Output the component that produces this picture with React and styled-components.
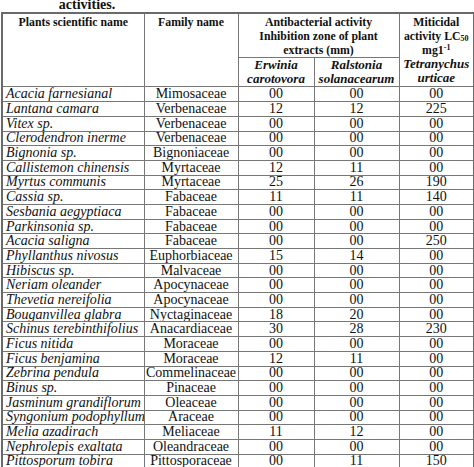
import styled, { createGlobalStyle } from 'styled-components';

const GlobalStyle = createGlobalStyle`
  html, body {
    margin: 0;
    padding: 0;
    background: #fff;
  }
  body {
    font-family: "Liberation Serif", "Times New Roman", serif;
    color: #111;
  }
`

const Page = styled.div`
  width: 474px;
  height: 467px;
  overflow: hidden;
  padding: 0 1px;
  box-sizing: border-box;
`

const Caption = styled.div`
  width: 172px;
  height: 12px;
  line-height: 9px;
  font-size: 14px;
  font-weight: bold;
  text-align: center;
  overflow: hidden;
`

const Table = styled.table`
  border-collapse: collapse;
  table-layout: fixed;
  width: 472px;
  border: 2px solid #6a6a6a;
`

const Row = styled.tr`
  height: ${p => p.$h}px;
`

const HeadCell = styled.th`
  border: 1px solid #777;
  padding: 0 1px;
  font-size: ${p => (p.$italic ? '13px' : '11.8px')};
  line-height: 14.1px;
  font-weight: bold;
  font-style: ${p => (p.$italic ? 'italic' : 'normal')};
  text-align: center;
  vertical-align: top;
  padding-top: ${p => (p.$italic ? '0' : '1px')};
`

const Cell = styled.td`
  border: 1px solid #777;
  border-top-color: #888;
  padding: 0;
  padding-left: ${p => (p.$name ? '3px' : '0')};
  height: 0;
  font-size: 14px;
  line-height: 12px;
  font-style: ${p => (p.$name ? 'italic' : 'normal')};
  text-align: ${p => (p.$name ? 'left' : 'center')};
  white-space: nowrap;
  overflow: hidden;
`

const Sub = styled.sub`
  font-size: 8px;
  line-height: 0;
  vertical-align: -1px;
`

const Sup = styled.sup`
  font-size: 8px;
  line-height: 0;
  vertical-align: 4px;
`

const Italic = styled.span`
  font-style: italic;
  font-size: 13px;
`

const rows = [
  ['Acacia farnesianal', 'Mimosaceae', '00', '00', '00'],
  ['Lantana camara', 'Verbenaceae', '12', '12', '225'],
  ['Vitex sp.', 'Verbenaceae', '00', '00', '00'],
  ['Clerodendron inerme', 'Verbenaceae', '00', '00', '00'],
  ['Bignonia sp.', 'Bignoniaceae', '00', '00', '00'],
  ['Callistemon chinensis', 'Myrtaceae', '12', '11', '00'],
  ['Myrtus communis', 'Myrtaceae', '25', '26', '190'],
  ['Cassia sp.', 'Fabaceae', '11', '11', '140'],
  ['Sesbania aegyptiaca', 'Fabaceae', '00', '00', '00'],
  ['Parkinsonia sp.', 'Fabaceae', '00', '00', '00'],
  ['Acacia saligna', 'Fabaceae', '00', '00', '250'],
  ['Phyllanthus nivosus', 'Euphorbiaceae', '15', '14', '00'],
  ['Hibiscus sp.', 'Malvaceae', '00', '00', '00'],
  ['Neriam oleander', 'Apocynaceae', '00', '00', '00'],
  ['Thevetia nereifolia', 'Apocynaceae', '00', '00', '00'],
  ['Bouganvillea glabra', 'Nyctaginaceae', '18', '20', '00'],
  ['Schinus terebinthifolius', 'Anacardiaceae', '30', '28', '230'],
  ['Ficus nitida', 'Moraceae', '00', '00', '00'],
  ['Ficus benjamina', 'Moraceae', '12', '11', '00'],
  ['Zebrina pendula', 'Commelinaceae', '00', '00', '00'],
  ['Binus sp.', 'Pinaceae', '00', '00', '00'],
  ['Jasminum grandiflorum', 'Oleaceae', '00', '00', '00'],
  ['Syngonium podophyllum', 'Araceae', '00', '00', '00'],
  ['Melia azadirach', 'Meliaceae', '11', '12', '00'],
  ['Nephrolepis exaltata', 'Oleandraceae', '00', '00', '00'],
  ['Pittosporum tobira', 'Pittosporaceae', '00', '11', '150'],
]

const App = () => {
  return (
    <Page>
      <GlobalStyle />
      <Caption>activities.</Caption>
      <Table>
        <colgroup>
          <col style={{ width: 142 }} />
          <col style={{ width: 94 }} />
          <col style={{ width: 76 }} />
          <col style={{ width: 85 }} />
          <col style={{ width: 75 }} />
        </colgroup>
        <thead>
          <Row $h={43}>
            <HeadCell rowSpan={2}>Plants scientific name</HeadCell>
            <HeadCell rowSpan={2}>Family name</HeadCell>
            <HeadCell colSpan={2}>
              Antibacterial activity<br />
              Inhibition zone of plant<br />
              extracts (mm)
            </HeadCell>
            <HeadCell rowSpan={2}>
              Miticidal<br />
              activity LC<Sub>50</Sub><br />
              mg1<Sup>-1</Sup><br />
              <Italic>Tetranychus<br />urticae</Italic>
            </HeadCell>
          </Row>
          <Row $h={28}>
            <HeadCell $italic>Erwinia<br />carotovora</HeadCell>
            <HeadCell $italic>Ralstonia<br />solanacearum</HeadCell>
          </Row>
        </thead>
        <tbody>
          {rows.map(r => (
            <Row key={r[0]} $h={14.7}>
              <Cell $name>{r[0]}</Cell>
              <Cell>{r[1]}</Cell>
              <Cell>{r[2]}</Cell>
              <Cell>{r[3]}</Cell>
              <Cell>{r[4]}</Cell>
            </Row>
          ))}
        </tbody>
      </Table>
    </Page>
  );
}

export default App;
